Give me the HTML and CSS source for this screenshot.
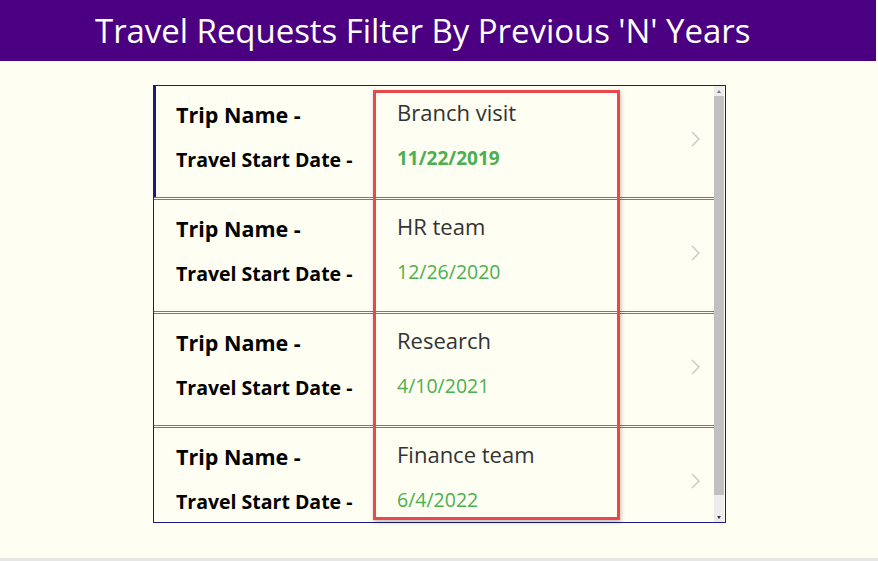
FILE: index.html
```html
<!DOCTYPE html>
<html lang="en">
<head>
    <meta charset="UTF-8">
    <meta name="viewport" content="width=device-width, initial-scale=1.0">
    <title>Travel Requests</title>
    <link rel="stylesheet" href="styles.css">
</head>
<body>
    <header class="header">
        <h1 class="title">Travel Requests Filter By Previous 'N' Years</h1>
    </header>

    <main class="screen">
        <div class="gallery">
            <div class="rows">
                <div class="row selected">
                    <div class="labels">
                        <span class="label-name">Trip Name -</span>
                        <span class="label-date">Travel Start Date -</span>
                    </div>
                    <div class="values">
                        <span class="value-name">Branch visit</span>
                        <span class="value-date">11/22/2019</span>
                    </div>
                    <svg class="chevron" width="9" height="16" viewBox="0 0 9 16"><polyline points="1,1 8,8 1,15" /></svg>
                </div>
                <div class="row">
                    <div class="labels">
                        <span class="label-name">Trip Name -</span>
                        <span class="label-date">Travel Start Date -</span>
                    </div>
                    <div class="values">
                        <span class="value-name">HR team</span>
                        <span class="value-date">12/26/2020</span>
                    </div>
                    <svg class="chevron" width="9" height="16" viewBox="0 0 9 16"><polyline points="1,1 8,8 1,15" /></svg>
                </div>
                <div class="row">
                    <div class="labels">
                        <span class="label-name">Trip Name -</span>
                        <span class="label-date">Travel Start Date -</span>
                    </div>
                    <div class="values">
                        <span class="value-name">Research</span>
                        <span class="value-date">4/10/2021</span>
                    </div>
                    <svg class="chevron" width="9" height="16" viewBox="0 0 9 16"><polyline points="1,1 8,8 1,15" /></svg>
                </div>
                <div class="row last">
                    <div class="labels">
                        <span class="label-name">Trip Name -</span>
                        <span class="label-date">Travel Start Date -</span>
                    </div>
                    <div class="values">
                        <span class="value-name">Finance team</span>
                        <span class="value-date">6/4/2022</span>
                    </div>
                    <svg class="chevron" width="9" height="16" viewBox="0 0 9 16"><polyline points="1,1 8,8 1,15" /></svg>
                </div>
            </div>

            <div class="scrollbar">
                <span class="arrow up"></span>
                <span class="thumb"></span>
                <span class="track"></span>
                <span class="arrow down"></span>
            </div>

            <!-- Cadre rouge de mise en évidence -->
            <div class="highlight"></div>
        </div>
    </main>

    <footer class="bottom-bar"></footer>
</body>
</html>
```

FILE: styles.css
```css
/* General */
body {
    margin: 0;
    font-family: "Open Sans", "Noto Sans", sans-serif;
    background-color: #fefef2;
    height: 561px;
    display: flex;
    flex-direction: column;
    overflow: hidden;
}

.header {
    background-color: #4b0082;
    height: 61px;
    margin-right: 2px;
    display: flex;
    align-items: center;
}

.title {
    margin: 0;
    padding-left: 95px;
    color: #fff;
    font-size: 33px;
    font-weight: 400;
    letter-spacing: -0.05px;
    white-space: nowrap;
}

.screen {
    flex: 1;
    padding: 24px 0 0 153px;
}

/* Gallery */
.gallery {
    position: relative;
    width: 571px;
    height: 436px;
    border: 1px solid #1a1a80;
    display: flex;
}

.rows {
    flex: 1;
    display: flex;
    flex-direction: column;
    overflow: hidden;
}

.row {
    flex-shrink: 0;
    height: 111px;
    border-bottom: 3px double #7070b8;
    display: flex;
    align-items: flex-start;
    position: relative;
}

.row.last {
    border-bottom: none;
}

.row.selected {
    box-shadow: inset 2px 0 0 #1a1a80;
}

.labels {
    width: 221px;
    padding: 15px 0 0 22px;
    display: flex;
    flex-direction: column;
    color: #000;
    font-weight: 700;
}

.label-name {
    font-size: 21.5px;
    line-height: 28px;
}

.label-date {
    font-size: 19.5px;
    line-height: 26px;
    margin-top: 18px;
}

.values {
    flex: 1;
    padding-top: 12px;
    display: flex;
    flex-direction: column;
}

.value-name {
    font-size: 22px;
    line-height: 28px;
    color: #333;
}

.value-date {
    font-size: 19.5px;
    line-height: 26px;
    margin-top: 19px;
    color: #4caf50;
}

.selected .value-date {
    font-weight: 700;
    font-size: 19px;
}

.chevron {
    align-self: center;
    margin: -6px 14px 0 0;
    fill: none;
    stroke: #c4c4c4;
    stroke-width: 1.2;
}

/* Scrollbar */
.scrollbar {
    width: 10px;
    margin-right: 1px;
    display: flex;
    flex-direction: column;
    background-color: #ececec;
}

.arrow {
    height: 10px;
    position: relative;
}

.arrow::after {
    content: "";
    position: absolute;
    left: 3px;
    top: 4px;
    border-left: 2px solid transparent;
    border-right: 2px solid transparent;
}

.arrow.up::after {
    border-bottom: 3px solid #777;
}

.arrow.down::after {
    border-top: 3px solid #333;
}

.thumb {
    height: 399px;
    background-color: #c0c0c0;
}

.track {
    flex: 1;
}

/* Highlight box */
.highlight {
    position: absolute;
    left: 219px;
    top: 4px;
    width: 241px;
    height: 424px;
    border: 3px solid #e8474b;
    box-shadow: 1px 2px 4px rgba(0, 0, 0, 0.25);
    pointer-events: none;
}

.bottom-bar {
    height: 3px;
    background-color: #e6e6e6;
}
```
